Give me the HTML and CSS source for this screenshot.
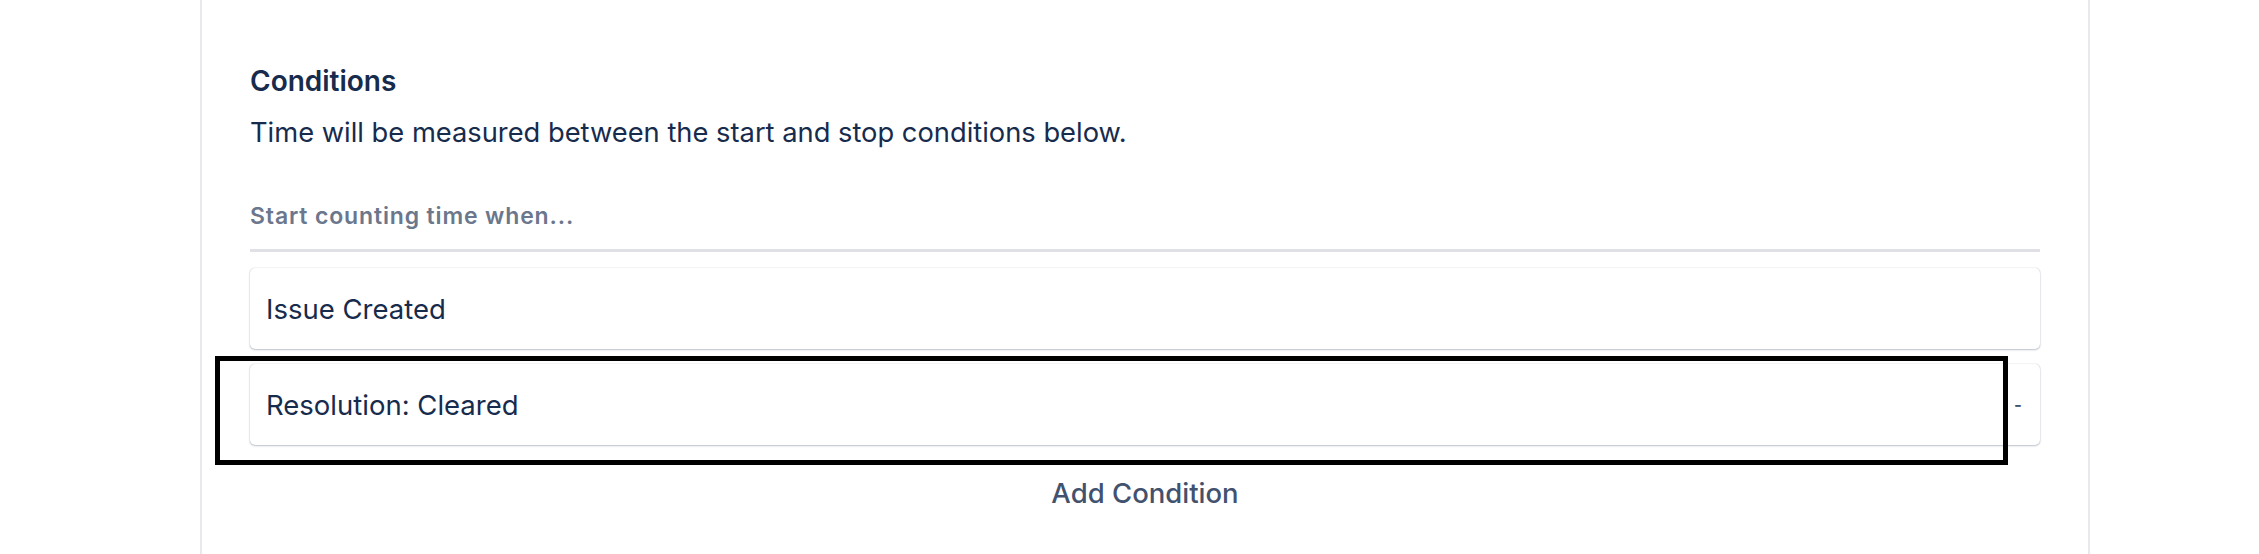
FILE: index.html
```html
<!DOCTYPE html>
<html lang="en">
<head>
    <meta charset="UTF-8">
    <meta name="viewport" content="width=device-width, initial-scale=1.0">
    <title>Conditions</title>
    <link rel="stylesheet" href="styles.css">
</head>
<body>
    <div class="panel">
        <h3 class="section-title">Conditions</h3>
        <p class="section-desc">Time will be measured between the start and stop conditions below.</p>

        <div class="condition-group">
            <div class="group-label">Start counting time when...</div>
            <div class="condition-list">
                <div class="condition-card">
                    <span class="condition-name">Issue Created</span>
                </div>
                <div class="condition-card">
                    <span class="condition-name">Resolution: Cleared</span>
                    <button class="remove-btn">-</button>
                    <div class="drag-outline"></div>
                </div>
            </div>
            <div class="add-row">
                <button class="add-btn">Add Condition</button>
            </div>
        </div>
    </div>
</body>
</html>
```

FILE: styles.css
```css
* {
    box-sizing: border-box;
    margin: 0;
    padding: 0;
}

html, body {
    height: 100%;
    overflow: hidden;
}

body {
    font-family: Inter, 'Noto Sans', sans-serif;
    background: #ffffff;
    color: #172b4d;
}

.panel {
    margin-left: 200px;
    width: 1890px;
    min-height: 100vh;
    border-left: 2px solid #e8e9ee;
    border-right: 2px solid #e8e9ee;
    padding: 64px 48px 0 48px;
}

.section-title {
    font-size: 28px;
    line-height: 34px;
    font-weight: 600;
    color: #172b4d;
}

.section-desc {
    margin-top: 18px;
    font-size: 27.3px;
    line-height: 34px;
    color: #172b4d;
}

.condition-group {
    margin-top: 52px;
}

.group-label {
    font-size: 23px;
    line-height: 28px;
    font-weight: 600;
    letter-spacing: 0.85px;
    color: #6b778c;
    padding-bottom: 19px;
    border-bottom: 3px solid #dfe1e6;
}

.condition-list {
    margin-top: 16px;
    display: flex;
    flex-direction: column;
    gap: 15px;
}

.condition-card {
    position: relative;
    display: flex;
    align-items: center;
    justify-content: space-between;
    height: 81px;
    padding: 0 16px;
    background: #ffffff;
    border-radius: 5px;
    box-shadow: 0 1px 2px rgba(9, 30, 66, 0.25), 0 0 1px rgba(9, 30, 66, 0.31);
}

.condition-name {
    font-size: 27.5px;
    line-height: 34px;
    color: #172b4d;
}

.remove-btn {
    border: none;
    background: none;
    font-family: inherit;
    font-size: 17px;
    font-weight: 600;
    color: #42526e;
    margin-right: 2px;
    cursor: pointer;
}

.drag-outline {
    position: absolute;
    left: -35px;
    top: -8px;
    width: 1793px;
    height: 109px;
    border: 5px solid #000000;
    pointer-events: none;
}

.add-row {
    margin-top: 31px;
    text-align: center;
}

.add-btn {
    border: none;
    background: none;
    font-family: inherit;
    font-size: 27.5px;
    line-height: 34px;
    font-weight: 500;
    color: #42526e;
    cursor: pointer;
}
```
